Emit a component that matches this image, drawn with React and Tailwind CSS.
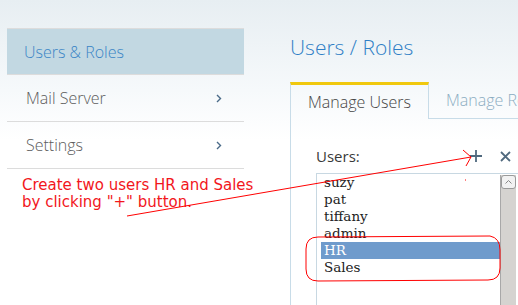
export default function App() {
  const users = ["suzy", "pat", "tiffany", "admin", "HR", "Sales"];
  return (
    <div className="relative w-[518px] h-[305px] overflow-hidden bg-[linear-gradient(to_bottom,#e7eef2_0px,#f6f9fb_90px,#ffffff_140px)] font-['Open_Sans',sans-serif] font-light">
      <div className="flex h-full">
        {/* Sidebar */}
        <div className="w-[244px] pl-[7px] pt-[28px] shrink-0">
          <div className="border-t border-[#dcdcdc]">
            <div className="h-[46px] bg-[#c2d8e2] border-b border-[#dcdcdc] flex items-center pl-[17px] text-[16px] text-[#3a85c6]">
              Users &amp; Roles
            </div>
            <div className="h-[47px] border-b border-[#dcdcdc] flex items-center justify-between pl-[19px] pr-[22px] text-[16px] text-[#5c5c5c]">
              <span>Mail Server</span>
              <svg width="6" height="9" viewBox="0 0 6 9"><path d="M1 1 L4.5 4.5 L1 8" fill="none" stroke="#4a6a88" strokeWidth="1.4" /></svg>
            </div>
            <div className="h-[47px] border-b border-[#dcdcdc] flex items-center justify-between pl-[19px] pr-[22px] text-[16px] text-[#5c5c5c]">
              <span>Settings</span>
              <svg width="6" height="9" viewBox="0 0 6 9"><path d="M1 1 L4.5 4.5 L1 8" fill="none" stroke="#4a6a88" strokeWidth="1.4" /></svg>
            </div>
          </div>
        </div>
        {/* Main */}
        <div className="ml-[46px] flex-1 flex flex-col min-w-0">
          <div className="shrink-0 pt-[32px] h-[82px] text-[21px] leading-[30px] text-[#2f7fc6] whitespace-nowrap">Users / Roles</div>
          <div className="shrink-0 flex h-[37px] whitespace-nowrap">
            <div className="shrink-0 w-[139px] border-t-[3px] border-t-[#f0c80e] border-l border-r border-[#c8dce8] flex items-center pl-[17px] text-[16px] text-[#454545]">
              Manage Users
            </div>
            <div className="flex-1 min-w-0 overflow-hidden border-b border-[#c8dce8] flex items-center pl-[17px] text-[16px] text-[#8cadc2]">
              Manage Roles
            </div>
          </div>
          <div className="flex-1 min-h-0 border-l border-[#c8dce8] pl-[25px] pt-[28px]">
            <div className="flex items-center h-[18px] pr-[7px]">
              <span className="text-[15px] text-[#3a3a3a] font-normal">Users:</span>
              <div className="ml-auto flex items-center gap-[18px]">
                <svg width="12" height="12" viewBox="0 0 12 12"><path d="M6 0 V12 M0 6 H12" stroke="#50697e" strokeWidth="1.8" /></svg>
                <svg width="11" height="11" viewBox="0 0 11 11"><path d="M1 1 L10 10 M10 1 L1 10" stroke="#50697e" strokeWidth="1.8" /></svg>
              </div>
            </div>
            <div className="mt-[8px] h-[200px] border-t border-l border-[#c8d8e2] bg-white flex">
              <div className="flex-1 pl-[4px] font-['DejaVu_Serif',serif] font-normal text-[13.5px] text-[#222]">
                {users.map((u) => (
                  <div key={u} className={"h-[17px] leading-[17px] pl-[3px] " + (u === "HR" ? "bg-[#6f9bcc] text-white" : "")}>{u}</div>
                ))}
              </div>
              <div className="w-[16px] mt-[1px] mr-[2px] bg-[#d5d3d0] border-l border-[#a8a8a8]">
                <div className="h-[14px] bg-[#f2f2f2] border border-[#9a9a9a] rounded-[3px] flex items-center justify-center">
                  <svg width="7" height="4" viewBox="0 0 7 4"><path d="M0.5 3.5 L3.5 0.5 L6.5 3.5" fill="none" stroke="#888" strokeWidth="1" /></svg>
                </div>
              </div>
            </div>
          </div>
        </div>
      </div>
      {/* Annotation overlay */}
      <div className="absolute left-[22px] top-[177px] font-['DejaVu_Sans',sans-serif] font-normal text-[15px] leading-[17px] text-[#f2161c] whitespace-nowrap">
        Create two users HR and Sales<br />by clicking "+" button.
      </div>
      <svg className="absolute left-0 top-0" width="518" height="305" viewBox="0 0 518 305">
        <g stroke="#ff0000" strokeWidth="1" fill="none">
          <path d="M127 216 L471 157" />
          <path d="M463 150 L471 157 L466 166" />
          <path d="M465 180 L466 180" />
          <path d="M318 237 L490 236 Q500 238 500 250 L500 268 Q500 280 488 280 L318 281 Q306 281 306 269 L306 249 Q306 237 318 237 Z" />
        </g>
      </svg>
    </div>
  );
}
